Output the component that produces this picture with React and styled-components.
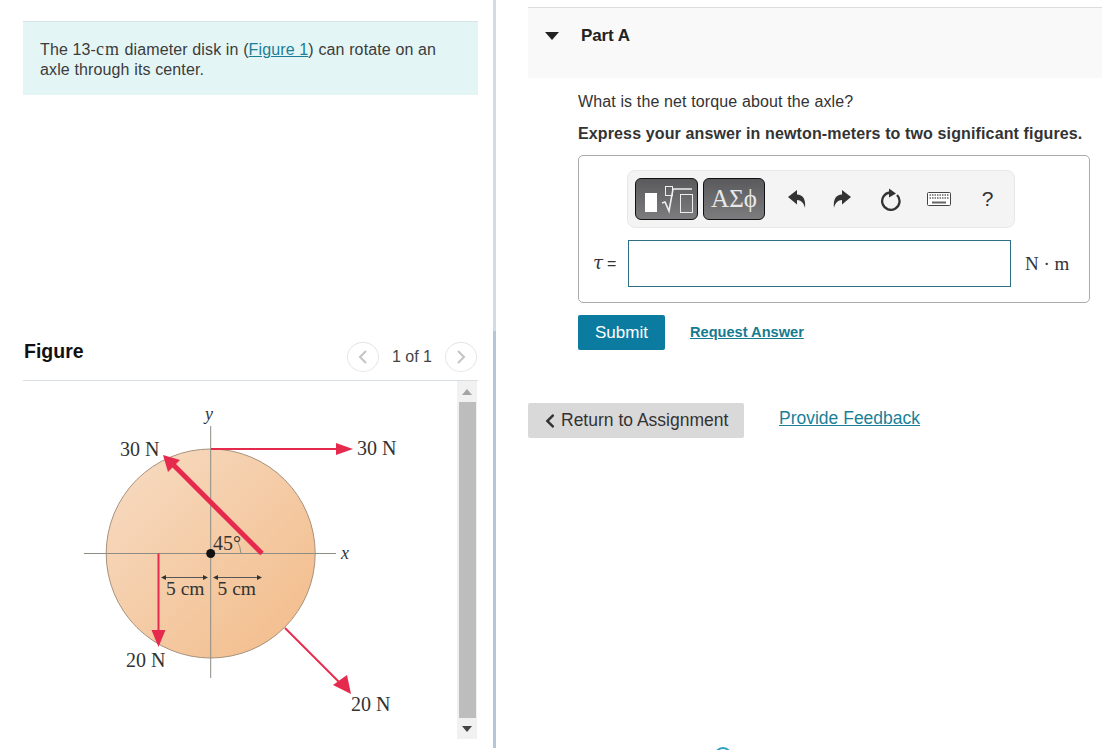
import React from 'react';
import styled, { createGlobalStyle } from 'styled-components';
import { FaChevronLeft } from 'react-icons/fa';

const GlobalStyle = createGlobalStyle`
  html, body {
    margin: 0;
    padding: 0;
    height: 750px;
    overflow: hidden;
    background: #ffffff;
    font-family: "Liberation Sans", Arial, sans-serif;
    color: #333333;
  }
`;

const Page = styled.div`
  position: relative;
  display: flex;
  width: 1102px;
  height: 750px;
  overflow: hidden;
`;

const LeftPane = styled.section`
  box-sizing: border-box;
  width: 493px;
  height: 748px;
  padding: 21px 15px 0 23px;
  display: flex;
  flex-direction: column;
`;

const Divider = styled.div`
  width: 3px;
  height: 748px;
  background: linear-gradient(#d3dce6 0, #d3dce6 331px, #b4c6d8 331px);
  flex: none;
`;

const RightPane = styled.section`
  box-sizing: border-box;
  flex: 1;
  min-width: 0;
  padding: 7px 0 0 32px;
`;

const IntroBox = styled.div`
  box-sizing: border-box;
  flex: none;
  height: 74px;
  padding: 18px 17px 0;
  background: #e4f5f6;
  border-top: 1px solid #d6e4e7;
  font-size: 16px;
  line-height: 20px;
  letter-spacing: 0.13px;
  color: #3c3c3c;
`;

const Unit = styled.span`
  font-family: "Liberation Serif", serif;
  font-size: 18px;
  line-height: 0;
  letter-spacing: 0.9px;
`;

const TextLink = styled.a`
  color: #1a7f98;
  text-decoration: underline;
`;

const FigureHeader = styled.header`
  box-sizing: border-box;
  flex: none;
  margin-top: 240px;
  height: 46px;
  display: flex;
  align-items: center;
  justify-content: space-between;
  padding: 0 1px;
  border-bottom: 1px solid #d9dee2;
`;

const FigureTitle = styled.h2`
  margin: 0 0 13px;
  font-size: 19.5px;
  line-height: 22px;
  font-weight: 700;
  color: #111111;
`;

const Pager = styled.div`
  display: flex;
  align-items: center;
  gap: 13px;
  margin-bottom: 1px;
  font-size: 16px;
  color: #444444;
`;

const PagerButton = styled.span`
  box-sizing: border-box;
  width: 32px;
  height: 30px;
  border: 1px solid #e6e6e6;
  border-radius: 50%;
  display: flex;
  align-items: center;
  justify-content: center;
`;

const FigureBody = styled.div`
  flex: none;
  display: flex;
  justify-content: space-between;
  height: 367px;
`;

const Diagram = styled.svg`
  display: block;
  width: 434px;
  height: 367px;
  flex: none;
`;

const Scrollbar = styled.div`
  width: 20px;
  height: 358px;
  margin-right: 1px;
  background: #f1f1f1;
  display: flex;
  flex-direction: column;
  align-items: center;
`;

const ScrollArrow = styled.div`
  height: 21px;
  flex: none;
  display: flex;
  align-items: center;
  justify-content: center;
`;

const ScrollThumb = styled.div`
  flex: 1;
  width: 17px;
  background: #bdbdbd;
`;

const PartHeader = styled.header`
  box-sizing: border-box;
  height: 71px;
  padding-top: 18px;
  display: flex;
  align-items: flex-start;
  background: #f9f9f9;
  border-top: 1px solid #dddddd;
`;

const Caret = styled.span`
  width: 0;
  height: 0;
  margin: 6px 0 0 17px;
  border-left: 7px solid transparent;
  border-right: 7px solid transparent;
  border-top: 8px solid #222222;
`;

const PartTitle = styled.h2`
  margin: 0 0 0 22px;
  font-size: 17px;
  line-height: 20px;
  letter-spacing: -0.1px;
  font-weight: 700;
  color: #222222;
`;

const PartBody = styled.div`
  padding: 14px 12px 0 50px;
`;

const Prompt = styled.p`
  margin: 0 0 ${p => (p.$strong ? 11 : 12)}px;
  font-size: 16px;
  line-height: 20px;
  letter-spacing: 0.13px;
  font-weight: ${p => (p.$strong ? 700 : 400)};
  color: #333333;
`;

const AnswerBox = styled.div`
  box-sizing: border-box;
  height: 148px;
  padding: 14px 0 0 48px;
  border: 1px solid #aaaaaa;
  border-radius: 5px;
`;

const Toolbar = styled.div`
  box-sizing: border-box;
  width: 388px;
  height: 58px;
  padding: 7px;
  display: flex;
  align-items: flex-start;
  background: #f4f4f4;
  border: 1px solid #e8e8e8;
  border-radius: 8px;
`;

const TemplateButton = styled.span`
  box-sizing: border-box;
  width: ${p => p.$width}px;
  height: 42px;
  margin-right: 5px;
  flex: none;
  display: flex;
  align-items: center;
  justify-content: center;
  border: 1px solid #111111;
  border-radius: 6px;
  background: linear-gradient(#5a5a5c, #7c7c7e);
  color: #e8e8e8;
  font-family: "Liberation Serif", serif;
  font-size: 25px;
`;

const ToolIcon = styled.span`
  width: ${p => p.$width}px;
  height: 42px;
  margin-left: ${p => p.$gap || 0}px;
  flex: none;
  display: flex;
  align-items: center;
  justify-content: center;
  color: #333333;
  font-size: ${p => p.$size || 18}px;
`;

const ArrowGlyph = styled.svg`
  display: block;
  width: 19px;
  height: 20px;
  transform: ${p => (p.$flip ? 'scaleX(-1)' : 'none')};
`;

const EquationRow = styled.div`
  display: flex;
  align-items: center;
  margin: 12px 0 0 -33px;
`;

const Symbol = styled.span`
  width: 34px;
  margin-left: -1px;
  margin-right: 1px;
  font-size: 16px;
  color: #333333;
  white-space: nowrap;
`;

const Tau = styled.i`
  margin-right: 4px;
  font-family: "DejaVu Serif", serif;
  font-size: 18px;
  line-height: 0;
`;

const AnswerInput = styled.input`
  box-sizing: border-box;
  flex: none;
  width: 383px;
  height: 47px;
  border: 1px solid #2f6f84;
  background: #ffffff;
  outline: none;
`;

const Units = styled.span`
  margin-left: 14px;
  font-family: "Liberation Serif", serif;
  font-size: 19px;
  color: #333333;
  white-space: nowrap;
`;

const ActionRow = styled.div`
  display: flex;
  align-items: center;
  margin-top: 12px;
  gap: 25px;
`;

const SubmitButton = styled.button`
  box-sizing: border-box;
  width: 87px;
  height: 35px;
  padding: 0;
  border: 0;
  border-radius: 2px;
  background: #0b7c9f;
  color: #ffffff;
  font: 17px "Liberation Sans", Arial, sans-serif;
`;

const RequestLink = styled(TextLink)`
  margin-bottom: 2px;
  font-size: 14.6px;
  font-weight: 700;
  color: #177a90;
`;

const FooterRow = styled.div`
  display: flex;
  align-items: flex-start;
  margin-top: 53px;
  gap: 35px;
`;

const ReturnButton = styled.button`
  box-sizing: border-box;
  width: 216px;
  height: 35px;
  padding: 0 0 0 14px;
  display: flex;
  align-items: center;
  gap: 3px;
  border: 0;
  border-radius: 2px;
  background: #d9d9d9;
  color: #333333;
  font: 17.500px "Liberation Sans", Arial, sans-serif;
`;

const FeedbackLink = styled(TextLink)`
  margin-top: 4px;
  font-size: 17.500px;
  line-height: 22px;
`;

const FloatingEdge = styled.span`
  position: absolute;
  left: 714px;
  top: 747px;
  width: 18px;
  height: 18px;
  border: 2px solid #2a9fc0;
  border-radius: 50%;
  box-sizing: border-box;
`;

const Label = styled.text`
  font-family: "Liberation Serif", serif;
  font-size: ${p => p.$size || 20}px;
  font-style: ${p => (p.$italic ? 'italic' : 'normal')};
  fill: #333333;
`;

const RED = '#e62a4e';

function DiskDiagram() {
  return (
    <Diagram viewBox="23 381 434 367">
      <defs>
        <linearGradient id="disk" x1="0" y1="0" x2="1" y2="1">
          <stop offset="0" stopColor="#f7dcc4" />
          <stop offset="1" stopColor="#f2bb88" />
        </linearGradient>
      </defs>
      <circle cx="210.7" cy="553.5" r="104.5" fill="url(#disk)" stroke="#a8917c" strokeWidth="1" />
      <g stroke="#8d8d86" strokeWidth="1" fill="none">
        <path d="M84 553.5H336" />
        <path d="M210.7 426V678" />
        <path d="M241 553.5a30 30 0 0 0-4-13" />
      </g>
      <path d="M162 577.5H207M214 577.5H261" stroke="#555555" strokeWidth="1" />
      <path d="M161 577.5l5-2.500v5zM208 577.5l-5-2.500v5zM213 577.5l5-2.500v5zM262 577.5l-5-2.500v5z" fill="#333333" />
      <circle cx="210.7" cy="553.5" r="4.500" fill="#111111" />
      <path d="M211 449H340" stroke={RED} strokeWidth="2" />
      <path d="M336 443L353 449L336 455Z" fill={RED} />
      <path d="M262 553.5L172 463.500" stroke={RED} strokeWidth="5" />
      <path d="M163 455L180 460L168 472Z" fill={RED} />
      <path d="M158.500 553.500V635" stroke={RED} strokeWidth="2" />
      <path d="M151.500 630H165.500L158.500 647Z" fill={RED} />
      <path d="M285 628L340 683" stroke={RED} strokeWidth="2" />
      <path d="M333 685L347 675L351 694Z" fill={RED} />
      <Label x="120" y="456">30 N</Label>
      <Label x="357" y="455">30 N</Label>
      <Label x="126" y="667">20 N</Label>
      <Label x="351" y="711">20 N</Label>
      <Label x="205" y="420" $italic $size={18}>y</Label>
      <Label x="341" y="559" $italic $size={18}>x</Label>
      <Label x="213" y="550">45°</Label>
      <Label x="166" y="595" $size={19.5}>5 cm</Label>
      <Label x="217.500" y="595" $size={19.5}>5 cm</Label>
    </Diagram>
  );
}

function ReplyArrow({ flip }) {
  return (
    <ArrowGlyph viewBox="0 0 19 20" $flip={flip}>
      <path d="M1 8L10 1V5.500C16 6 19 10 18 19C17 14 14 11 10 11V15.500Z" fill="#333333" />
    </ArrowGlyph>
  );
}

function App() {
  return (
    <Page>
      <GlobalStyle />
      <LeftPane>
        <IntroBox>
          The 13-<Unit>cm</Unit> diameter disk in (<TextLink>Figure 1</TextLink>) can rotate on an
          <br />
          axle through its center.
        </IntroBox>
        <FigureHeader>
          <FigureTitle>Figure</FigureTitle>
          <Pager>
            <PagerButton>
              <svg width="10" height="16" viewBox="0 0 10 16">
                <path d="M8 2L2 8l6 6" fill="none" stroke="#c4c4c4" strokeWidth="2" />
              </svg>
            </PagerButton>
            <span>1 of 1</span>
            <PagerButton>
              <svg width="10" height="16" viewBox="0 0 10 16">
                <path d="M2 2l6 6-6 6" fill="none" stroke="#c4c4c4" strokeWidth="2" />
              </svg>
            </PagerButton>
          </Pager>
        </FigureHeader>
        <FigureBody>
          <DiskDiagram />
          <Scrollbar>
            <ScrollArrow>
              <svg width="10" height="6"><path d="M0 6L5 0l5 6z" fill="#a3a3a3" /></svg>
            </ScrollArrow>
            <ScrollThumb />
            <ScrollArrow>
              <svg width="10" height="6"><path d="M0 0L5 6l5-6z" fill="#444444" /></svg>
            </ScrollArrow>
          </Scrollbar>
        </FigureBody>
      </LeftPane>
      <Divider />
      <RightPane>
        <PartHeader>
          <Caret />
          <PartTitle>Part A</PartTitle>
        </PartHeader>
        <PartBody>
          <Prompt>What is the net torque about the axle?</Prompt>
          <Prompt $strong>Express your answer in newton-meters to two significant figures.</Prompt>
          <AnswerBox>
            <Toolbar>
              <TemplateButton $width={63}>
                <svg width="61" height="40" viewBox="0 0 61 40">
                  <rect x="9" y="14" width="12" height="19" fill="#ffffff" />
                  <rect x="29.500" y="7.500" width="7" height="9" fill="none" stroke="#eeeeee" />
                  <path d="M26 24l3-1 4 9 4-22h19" fill="none" stroke="#eeeeee" strokeWidth="1.600" />
                  <rect x="44.500" y="15.500" width="12" height="18" fill="none" stroke="#eeeeee" />
                </svg>
              </TemplateButton>
              <TemplateButton $width={62}>ΑΣϕ</TemplateButton>
              <ToolIcon $width={52}><ReplyArrow /></ToolIcon>
              <ToolIcon $width={41}><ReplyArrow flip /></ToolIcon>
              <ToolIcon $width={55}>
                <svg width="22" height="24" viewBox="0 0 22 24">
                  <path d="M17 8A8.700 8.700 0 1 1 10 5.500" fill="none" stroke="#333333" strokeWidth="2.300" />
                  <path d="M9 1.500L16 6.500L9 10.500Z" fill="#333333" />
                </svg>
              </ToolIcon>
              <ToolIcon $width={41}>
                <svg width="24" height="14" viewBox="0 0 24 14">
                  <rect x="0.500" y="0.500" width="23" height="13" rx="1" fill="#ffffff" stroke="#444444" />
                  <path d="M2.500 3H21.500M2.500 6H21.500" stroke="#666666" strokeWidth="1.500" strokeDasharray="1.500 1" />
                  <path d="M5 10.500H19" stroke="#666666" strokeWidth="2" />
                </svg>
              </ToolIcon>
              <ToolIcon $width={33} $size={21} $gap={12}>?</ToolIcon>
            </Toolbar>
            <EquationRow>
              <Symbol><Tau>τ</Tau>=</Symbol>
              <AnswerInput aria-label="torque" />
              <Units>N · m</Units>
            </EquationRow>
          </AnswerBox>
          <ActionRow>
            <SubmitButton>Submit</SubmitButton>
            <RequestLink>Request Answer</RequestLink>
          </ActionRow>
        </PartBody>
        <FooterRow>
          <ReturnButton><FaChevronLeft size={16} /> Return to Assignment</ReturnButton>
          <FeedbackLink>Provide Feedback</FeedbackLink>
        </FooterRow>
      </RightPane>
      <FloatingEdge />
    </Page>
  );
}

export default App;
